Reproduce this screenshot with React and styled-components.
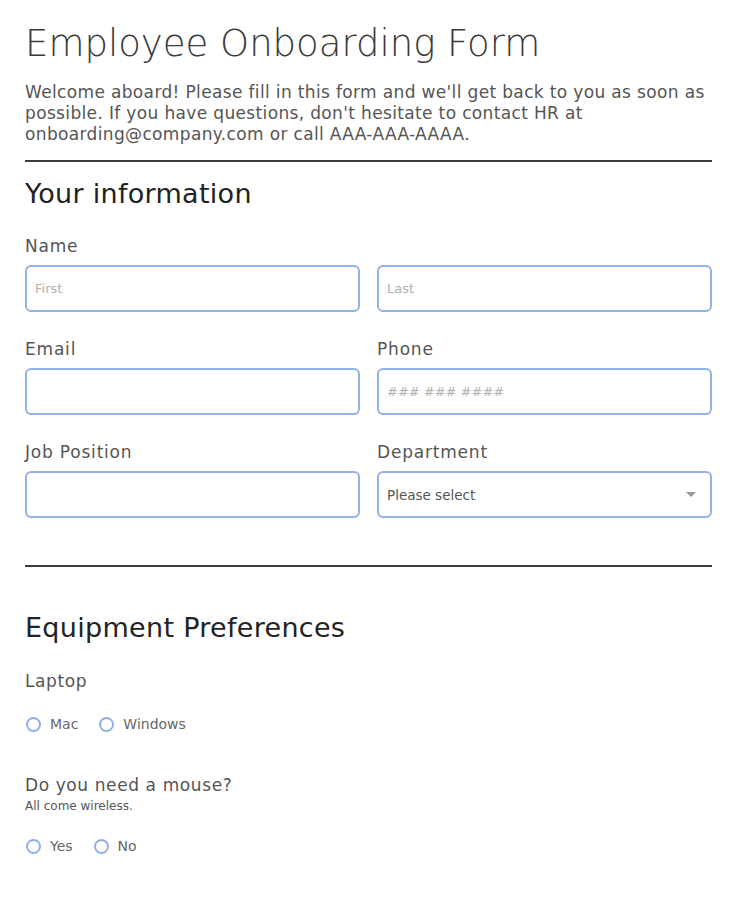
import styled, { createGlobalStyle } from 'styled-components';

const GlobalStyle = createGlobalStyle`
  body {
    margin: 0;
    background: #fff;
    font-family: "DejaVu Sans", "Noto Sans", sans-serif;
  }
  * {
    box-sizing: border-box;
  }
`;

const Page = styled.div`
  width: 740px;
  padding: 22px 28px 40px 25px;
`;

const Title = styled.h1`
  margin: 0;
  font-size: 37px;
  line-height: 44px;
  font-weight: 300;
  color: #3a3a3a;
`;

const Intro = styled.p`
  margin: 16px 0 0;
  font-size: 17px;
  line-height: 21px;
  letter-spacing: 0.35px;
  color: #555;
`;

const Divider = styled.hr`
  margin: ${(p) => p.$top || 15}px 0 0;
  border: 0;
  height: 2px;
  background: #3c3c3c;
`;

const SectionTitle = styled.h2`
  margin: ${(p) => p.$top || 16}px 0 0;
  font-size: 27px;
  line-height: 32px;
  letter-spacing: 0.3px;
  font-weight: 400;
  color: #222;
`;

const Grid = styled.div`
  display: grid;
  grid-template-columns: 1fr 1fr;
  column-gap: 17px;
  row-gap: 27px;
  margin-top: 26px;
`;

const Field = styled.div`
  display: flex;
  flex-direction: column;
  grid-column: ${(p) => (p.$full ? '1 / -1' : 'auto')};
`;

const Label = styled.div`
  font-size: 17px;
  line-height: 20px;
  letter-spacing: 0.8px;
  color: #555;
  margin-bottom: 9px;
`;

const Pair = styled.div`
  display: grid;
  grid-template-columns: 1fr 1fr;
  column-gap: 17px;
`;

const Input = styled.input`
  height: 47px;
  width: 100%;
  border: 2px solid #92b2e6;
  border-radius: 6px;
  padding: 0 8px;
  font-family: inherit;
  font-size: 13px;
  color: #444;
  outline: none;
  background: #fff;

  &::placeholder {
    color: #b0b0b0;
  }
`;

const SelectBox = styled.div`
  position: relative;
  height: 47px;
  border: 2px solid #92b2e6;
  border-radius: 6px;
  padding: 0 8px;
  display: flex;
  align-items: center;
  justify-content: space-between;
  font-size: 13.5px;
  color: #555;
`;

const Caret = styled.span`
  width: 0;
  height: 0;
  border-left: 5px solid transparent;
  border-right: 5px solid transparent;
  border-top: 5px solid #999;
  margin-right: 6px;
`;

const Question = styled.div`
  margin-top: ${(p) => p.$top || 0}px;
  font-size: 17px;
  line-height: 20px;
  letter-spacing: 0.6px;
  color: #555;
`;

const Hint = styled.div`
  font-size: 12px;
  line-height: 15px;
  color: #555;
  margin-top: 4px;
`;

const RadioRow = styled.div`
  display: flex;
  gap: 20px;
  margin-top: ${(p) => p.$top || 24}px;
`;

const RadioOption = styled.label`
  display: flex;
  align-items: center;
  gap: 9px;
  font-size: 14px;
  line-height: 18px;
  color: #666;
`;

const Circle = styled.span`
  width: 15px;
  height: 15px;
  border: 2px solid #8fb0e6;
  border-radius: 50%;
  margin-left: 1px;
`;

function Radio({ label }) {
  return (
    <RadioOption>
      <Circle />
      {label}
    </RadioOption>
  );
}

export default function App() {
  return (
    <Page>
      <GlobalStyle />
      <Title>Employee Onboarding Form</Title>
      <Intro>
        Welcome aboard! Please fill in this form and we'll get back to you as soon as
        possible. If you have questions, don't hesitate to contact HR at
        onboarding@company.com or call AAA-AAA-AAAA.
      </Intro>
      <Divider />

      <SectionTitle>Your information</SectionTitle>
      <Grid>
        <Field $full>
          <Label>Name</Label>
          <Pair>
            <Input placeholder="First" />
            <Input placeholder="Last" />
          </Pair>
        </Field>
        <Field>
          <Label>Email</Label>
          <Input />
        </Field>
        <Field>
          <Label>Phone</Label>
          <Input placeholder="### ### ####" />
        </Field>
        <Field>
          <Label>Job Position</Label>
          <Input />
        </Field>
        <Field>
          <Label>Department</Label>
          <SelectBox>
            Please select
            <Caret />
          </SelectBox>
        </Field>
      </Grid>

      <Divider $top={47} />

      <SectionTitle $top={45}>Equipment Preferences</SectionTitle>
      <Question $top={27}>Laptop</Question>
      <RadioRow $top={24}>
        <Radio label="Mac" />
        <Radio label="Windows" />
      </RadioRow>

      <Question $top={42}>Do you need a mouse?</Question>
      <Hint>All come wireless.</Hint>
      <RadioRow $top={23}>
        <Radio label="Yes" />
        <Radio label="No" />
      </RadioRow>
    </Page>
  );
}
